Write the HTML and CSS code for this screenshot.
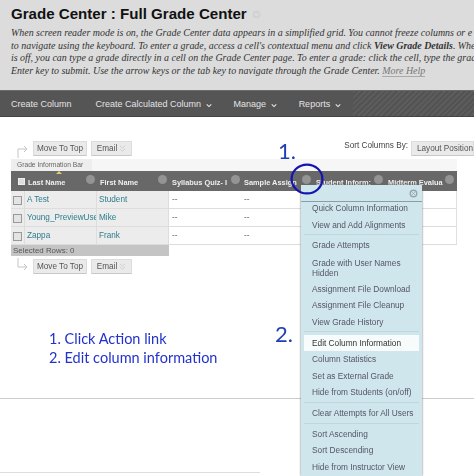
FILE: index.html
```html
<!DOCTYPE html>
<html lang="en">
<head>
<meta charset="utf-8">
<title>Grade Center</title>
<link rel="stylesheet" href="styles.css">
</head>
<body>
<div class="page">
  <header class="head">
    <h1 class="title">Grade Center : Full Grade Center <span class="title-dot"><svg viewBox="0 0 10 10" width="9" height="9"><circle cx="5" cy="5" r="4.5" fill="#d2d2d2"/><path d="M3 4l2 2 2-2" fill="none" stroke="#eee" stroke-width="1"/></svg></span></h1>
    <p class="intro">
      <span class="line">When screen reader mode is on, the Grade Center data appears in a simplified grid. You cannot freeze columns or e</span>
      <span class="line">to navigate using the keyboard. To enter a grade, access a cell's contextual menu and click <b>View Grade Details</b>. When</span>
      <span class="line">is off, you can type a grade directly in a cell on the Grade Center page. To enter a grade: click the cell, type the grade</span>
      <span class="line">Enter key to submit. Use the arrow keys or the tab key to navigate through the Grade Center. <a class="more">More Help</a></span>
    </p>
  </header>
  <nav class="nav">
    <div class="nav-items">
      <span class="nav-item">Create Column</span>
      <span class="nav-item">Create Calculated Column <svg class="chev" viewBox="0 0 8 6" width="6" height="5"><path d="M1 1.5l3 3 3-3" fill="none" stroke="#e8e8e8" stroke-width="1.4"/></svg></span>
      <span class="nav-item">Manage <svg class="chev" viewBox="0 0 8 6" width="6" height="5"><path d="M1 1.5l3 3 3-3" fill="none" stroke="#e8e8e8" stroke-width="1.4"/></svg></span>
      <span class="nav-item">Reports <svg class="chev" viewBox="0 0 8 6" width="6" height="5"><path d="M1 1.5l3 3 3-3" fill="none" stroke="#e8e8e8" stroke-width="1.4"/></svg></span>
    </div>
    <div class="nav-hatch"></div>
  </nav>
  <main class="content">
    <div class="toolbar">
      <svg class="elbow" viewBox="0 0 12 14" width="12" height="14"><path d="M1 14V5h8M7 2l3 3-3 3" fill="none" stroke="#c4c4c4"/></svg>
      <span class="btn btn-move">Move To Top</span>
      <span class="btn btn-email">Email <svg class="dbl" viewBox="0 0 8 8" width="7" height="7"><path d="M1 1l3 2.5L7 1M1 4.5L4 7l3-2.5" fill="none" stroke="#ccc"/></svg></span>
      <span class="sort-label">Sort Columns By:</span>
      <span class="btn btn-sort">Layout Position</span>
    </div>
    <div class="infobar"><span class="infobar-label">Grade Information Bar</span></div>
    <div class="grid">
      <div class="row row-head">
        <span class="c0"><i class="box box-head"></i></span>
        <span class="c1">Last Name<i class="sort-mark"></i><i class="act"></i></span>
        <span class="c2">First Name<i class="act"></i></span>
        <span class="c3">Syllabus Quiz- I<i class="act act-near"></i></span>
        <span class="c3">Sample Assign<i class="act"></i></span>
        <span class="c3">Student Inform:<i class="act"></i></span>
        <span class="c3">Midterm Evalua<i class="act act-far"></i></span>
      </div>
      <div class="row">
        <span class="c0 sh"><i class="box"></i></span><span class="c1 sh lk">A Test</span><span class="c2 sh lk">Student</span>
        <span class="c3 dd">--</span><span class="c3 dd">--</span><span class="c3"></span><span class="c3"></span>
      </div>
      <div class="row">
        <span class="c0 sh"><i class="box"></i></span><span class="c1 sh lk">Young_PreviewUser</span><span class="c2 sh lk">Mike</span>
        <span class="c3 dd">--</span><span class="c3 dd">--</span><span class="c3"></span><span class="c3"></span>
      </div>
      <div class="row">
        <span class="c0 sh"><i class="box"></i></span><span class="c1 sh lk">Zappa</span><span class="c2 sh lk">Frank</span>
        <span class="c3 dd">--</span><span class="c3 dd">--</span><span class="c3"></span><span class="c3"></span>
      </div>
      <div class="selected">Selected Rows: 0</div>
    </div>
    <div class="toolbar toolbar-bottom">
      <svg class="elbow" viewBox="0 0 12 14" width="12" height="14"><path d="M1 0v9h8M7 6l3 3-3 3" fill="none" stroke="#c4c4c4"/></svg>
      <span class="btn btn-move">Move To Top</span>
      <span class="btn btn-email">Email <svg class="dbl" viewBox="0 0 8 8" width="7" height="7"><path d="M1 1l3 2.5L7 1M1 4.5L4 7l3-2.5" fill="none" stroke="#ccc"/></svg></span>
    </div>
    <ol class="notes">
      <li>1. Click Action link</li>
      <li>2. Edit column information</li>
    </ol>
    <div class="rule rule-one"></div>
    <div class="rule rule-two"></div>
  </main>
  <span class="step step-one">1.</span>
  <span class="step step-two">2.</span>
  <div class="menu">
    <div class="menu-top"><svg viewBox="0 0 10 10" width="9" height="9"><circle cx="5" cy="5" r="3.6" fill="none" stroke="#9aa5a8" stroke-width="1.6"/><path d="M3.6 3.6l2.8 2.8M6.4 3.6L3.6 6.4" stroke="#9aa5a8"/></svg></div>
    <ul class="group group-first"><li>Quick Column Information</li><li>View and Add Alignments</li></ul>
    <ul class="group"><li>Grade Attempts</li><li class="two">Grade with User Names Hidden</li><li>Assignment File Download</li><li>Assignment File Cleanup</li><li>View Grade History</li></ul>
    <ul class="group"><li class="on">Edit Column Information</li><li>Column Statistics</li><li>Set as External Grade</li><li>Hide from Students (on/off)</li></ul>
    <ul class="group"><li>Clear Attempts for All Users</li></ul>
    <ul class="group"><li>Sort Ascending</li><li>Sort Descending</li><li>Hide from Instructor View</li></ul>
  </div>
  <svg class="ring" viewBox="0 0 34 32" width="34" height="32"><ellipse cx="17" cy="16" rx="15.4" ry="14.4" fill="none" stroke="#1414b0" stroke-width="2.2"/></svg>
</div>
</body>
</html>
```
FILE: styles.css
```css
* { box-sizing: border-box; }
html, body { margin: 0; padding: 0; background: #fff; }
body { font-family: "Liberation Sans", Arial, sans-serif; }
.page { position: relative; width: 474px; height: 476px; overflow: hidden; filter: blur(0.4px); }

.head { height: 90px; background: #dcdcdc; padding: 5px 0 0 11px; overflow: hidden; }
.title { margin: 0; font-size: 15.1px; line-height: 18px; font-weight: bold; color: #111; white-space: nowrap; }
.title-dot { display: inline-block; vertical-align: 0; margin-left: 1px; }
.intro { margin: 4px 0 0; font-family: "Liberation Serif", serif; font-style: italic; font-size: 9.95px; line-height: 12.6px; color: #333; }
.line { display: block; white-space: nowrap; }
.more { color: #777; border-bottom: 1px solid #aaa; }

.nav { height: 27px; display: flex; background: #555; border-top: 1px solid #6a6a6a; border-bottom: 1px solid #444; }
.nav-items { width: 353px; display: flex; align-items: center; padding-left: 11px; gap: 22px; font-size: 9px; color: #e4e4e4; white-space: nowrap; }
.nav-item:nth-child(2) { margin-left: 2px; }
.chev { margin-left: 2px; vertical-align: -1px; }
.nav-hatch { flex: 1; background: repeating-linear-gradient(135deg, #5c5c5c 0 2px, #535353 2px 4px); }

.content { position: relative; height: 359px; padding-top: 24px; }
.toolbar { display: flex; align-items: center; height: 15px; padding-left: 17px; position: relative; font-size: 8.2px; color: #555; }
.elbow { margin-right: 4px; margin-top: 4px; }
.btn { height: 15px; display: inline-flex; align-items: center; justify-content: center; background: #eaeaea; border: 1px solid #dcdcdc; border-bottom-color: #c8c8c8; border-radius: 1px; white-space: nowrap; }
.btn-move { width: 54px; }
.btn-email { width: 41px; margin-left: 4px; gap: 2px; }
.sort-label { margin-left: auto; margin-right: 3px; margin-top: -6px; color: #444; }
.btn-sort { width: 63px; margin-right: 0; justify-content: flex-start; padding-left: 5px; }
.toolbar-bottom { margin-top: 3px; }
.toolbar-bottom .elbow { margin-top: -4px; }

.infobar { margin: 3px 17px 0 11px; height: 12px; background: #f6f6f6; font-size: 6.7px; line-height: 12px; color: #666; }
.infobar-label { display: inline-block; width: 81px; padding-left: 6px; background: #eeeeee; white-space: nowrap; }

.grid { margin-left: 11px; width: 446px; }
.row { display: flex; height: 18px; font-size: 8.2px; line-height: 17px; color: #666; }
.row > span { position: relative; display: block; overflow: hidden; white-space: nowrap; border-bottom: 1px solid #ddd; }
.row > span:last-child { border-right: 1px solid #e0e0e0; }
.c0 { width: 14px; }
.c1, .c2 { width: 72px; padding-left: 2px; }
.c3 { width: 72px; padding-left: 3px; }
.row .sh { background: #ececec; border-right: 1px solid #ddd; }
.lk { color: #2e7d8c; }
.box { display: block; width: 9px; height: 9px; margin: 5px 0 0 2px; background: #e4e4e4; border: 1px solid #999; }
.row-head { height: 20px; background: #686868; color: #efefef; font-weight: bold; font-size: 7.4px; line-height: 24px; }
.row-head > span { border: 0 !important; overflow: visible; padding-left: 3px; }
.box-head { width: 7px; height: 7px; margin: 7px 0 0 4px; background: #ddd; border-color: #eee; }
.act { position: absolute; right: 2.5px; top: 3.5px; width: 9px; height: 9px; border-radius: 50%; background: #949494; }
.act-near { right: 1.5px; }
.act-far { right: 3.5px; }
.sort-mark { position: absolute; left: 31px; top: 0; width: 0; height: 0; border: 3px solid transparent; border-top: 0; border-bottom: 3px solid #e6c86a; }
.selected { width: 158px; height: 11px; background: #c4c4c4; font-size: 7.9px; line-height: 11px; color: #555; padding-left: 2px; }

.notes { list-style: none; position: absolute; left: 49px; top: 213px; margin: 0; padding: 0; font-family: "Lato", sans-serif; font-size: 14.5px; line-height: 18.5px; color: #2233cc; white-space: nowrap; }
.rule { position: absolute; left: 0; }
.rule-one { top: 281px; width: 474px; height: 1px; background: #ccc; }
.rule-two { top: 355px; width: 260px; height: 1px; background: #ddd; }

.step { position: absolute; font-family: "Lato", sans-serif; color: #1f3fb8; font-size: 22px; line-height: 22px; }
.step-one { left: 278px; top: 140px; }
.step-two { left: 275px; top: 323px; }
.ring { position: absolute; left: 290px; top: 163px; }

.menu { position: absolute; left: 301px; top: 185px; width: 121px; height: 291px; background: #cfe6ed; box-shadow: 0 0 2px #666; font-size: 8.3px; color: #556; padding: 0 3px; }
.menu-top { height: 17px; margin: 0 -3px; display: flex; justify-content: flex-end; align-items: center; padding-right: 4px; border-bottom: 1px solid #8a9ea4; }
.group { list-style: none; margin: 0; padding: 2.2px 0 1px; border-bottom: 1px solid #bfd6dc; }
.group-first { margin-top: -2px; padding-top: 0; }
.group:last-child { border-bottom: 0; }
.group li { padding: 0 8px; line-height: 16.6px; height: 16.6px; white-space: nowrap; }
.group li.two { height: 26.6px; line-height: 10.3px; padding-top: 3.7px; white-space: normal; }
.group li.on { background: #f7fbfc; color: #333; }
```
